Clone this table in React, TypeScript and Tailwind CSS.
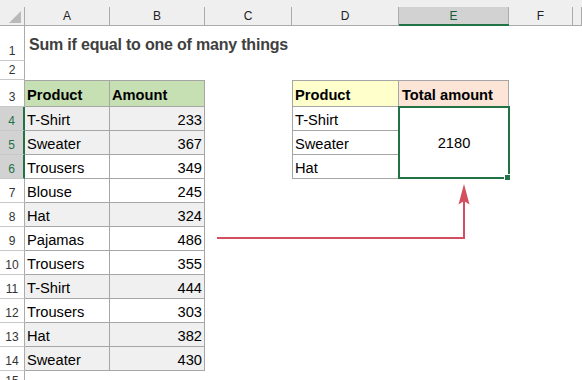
import React from "react";

const data: [string, number, boolean][] = [
  ["T-Shirt", 233, true],
  ["Sweater", 367, true],
  ["Trousers", 349, false],
  ["Blouse", 245, false],
  ["Hat", 324, true],
  ["Pajamas", 486, false],
  ["Trousers", 355, false],
  ["T-Shirt", 444, true],
  ["Trousers", 303, false],
  ["Hat", 382, true],
  ["Sweater", 430, true],
];

function ColHead({ label, selected }: { label: string; selected?: boolean }) {
  return (
    <div
      className={
        selected
          ? "flex bg-[#d2d2d2] border-b-2 border-b-[#217346]"
          : "flex bg-[#efefef] border-b border-b-[#ababab]"
      }
    >
      <div
        className={
          selected
            ? "flex-1 flex items-center justify-center text-[12px] leading-[14px] text-[#185c37]"
            : "flex-1 flex items-center justify-center text-[12px] leading-[14px] text-[#222222]"
        }
      >
        {label}
      </div>
      <div className="w-px bg-[#ababab]" />
    </div>
  );
}

function RowHead({ n, selected }: { n: number; selected?: boolean }) {
  return (
    <div
      className={
        selected
          ? "flex items-end justify-center pb-[2px] text-[12px] leading-[14px] bg-[#d2d2d2] text-[#217346] border-b border-b-[#c8c8c8] border-r-2 border-r-[#217346]"
          : "flex items-end justify-center pb-[2px] text-[12px] leading-[14px] bg-white text-[#333333] border-b border-b-[#c8c8c8] border-r border-r-[#ababab]"
      }
    >
      {n}
    </div>
  );
}

export default function App() {
  return (
    <div className="relative w-[582px] h-[380px] overflow-hidden bg-white font-['Liberation_Sans',Arial,sans-serif]">
      <div className="grid grid-cols-[25px_85px_95px_87px_107px_110px_64px_1fr] grid-rows-[7px_19px_35px_19px_27px_repeat(11,24px)_20px]">
        {/* top band */}
        <div className="col-span-8 bg-[#efefef]" />

        {/* column headers */}
        <div className="flex bg-[#efefef] border-b border-b-[#ababab]">
          <div className="flex-1 flex items-end justify-end pr-[3px] pb-[2px]">
            <svg width="12" height="12" viewBox="0 0 12 12">
              <polygon points="12,0 12,12 0,12" fill="#b9b9b9" />
            </svg>
          </div>
          <div className="w-px bg-[#ababab]" />
        </div>
        <ColHead label="A" />
        <ColHead label="B" />
        <ColHead label="C" />
        <ColHead label="D" />
        <ColHead label="E" selected />
        <ColHead label="F" />
        <ColHead label="" />

        {/* row 1 */}
        <RowHead n={1} />
        <div className="col-span-7 flex items-center pt-[2px] pl-[4px] text-[16px] leading-[18px] font-bold tracking-[-0.2px] text-[#404040] whitespace-nowrap">
          Sum if equal to one of many things
        </div>

        {/* row 2 */}
        <RowHead n={2} />
        <div className="col-span-7" />

        {/* row 3 */}
        <RowHead n={3} />
        <div className="flex items-end pl-[2px] pb-[2px] bg-[#c6e0b4] border-t border-b border-r border-[#a6a6a6] text-[14.67px] leading-[17px] font-bold text-black">
          Product
        </div>
        <div className="flex items-end pl-[2px] pb-[2px] bg-[#c6e0b4] border-t border-b border-r border-[#a6a6a6] text-[14.67px] leading-[17px] font-bold text-black">
          Amount
        </div>
        <div />
        <div className="flex items-end pl-[2px] pb-[2px] bg-[#ffffcc] border-l border-t border-b border-r border-[#a6a6a6] text-[14.67px] leading-[17px] font-bold text-black">
          Product
        </div>
        <div className="flex items-end pl-[3px] pb-[2px] bg-[#fce4d6] border-t border-b border-r border-[#a6a6a6] text-[14.67px] leading-[17px] font-bold text-black whitespace-nowrap">
          Total amount
        </div>
        <div />
        <div />

        {/* rows 4..14 */}
        {data.map(([p, amt, hl], i) => {
          const rowNum = i + 4;
          const sel = rowNum >= 4 && rowNum <= 6;
          const bg = hl ? "bg-[#f0f0f0]" : "bg-white";
          const dLabels = ["T-Shirt", "Sweater", "Hat"];
          return (
            <React.Fragment key={rowNum}>
              <RowHead n={rowNum} selected={sel} />
              <div
                className={`flex items-end pl-[2px] pb-[1px] border-b border-r border-[#a6a6a6] text-[14.67px] leading-[17px] text-black whitespace-nowrap ${bg}`}
              >
                {p}
              </div>
              <div
                className={`flex items-end justify-end pr-[2px] pb-[1px] border-b border-r border-[#a6a6a6] text-[14.67px] leading-[17px] text-black ${bg}`}
              >
                {amt}
              </div>
              <div />
              {sel ? (
                <>
                  <div className="flex items-end pl-[2px] pb-[1px] bg-white border-l border-b border-r border-[#a6a6a6] text-[14.67px] leading-[17px] text-black">
                    {dLabels[rowNum - 4]}
                  </div>
                  {rowNum === 4 && (
                    <div className="relative row-span-3 flex items-center justify-center bg-white text-[14.67px] leading-[17px] text-black">
                      2180
                      <div className="absolute left-[-1px] top-[-1px] right-[-1px] bottom-0 border-2 border-[#217346]">
                        <div className="absolute right-[-3px] bottom-[-4px] w-[7px] h-[7px] bg-[#217346] border border-white" />
                      </div>
                    </div>
                  )}
                  <div />
                  <div />
                </>
              ) : (
                <div className="col-span-4" />
              )}
            </React.Fragment>
          );
        })}

        {/* row 15 */}
        <RowHead n={15} />
        <div className="col-span-7" />
      </div>

      {/* arrow */}
      <svg className="absolute left-0 top-0 pointer-events-none" width="582" height="380">
        <path d="M217 238 H464 V201" stroke="#d24f5f" strokeWidth="2" fill="none" />
        <polygon points="464,184 469.5,204.5 464,201 458.5,204.5" fill="#d24f5f" />
      </svg>
    </div>
  );
}
